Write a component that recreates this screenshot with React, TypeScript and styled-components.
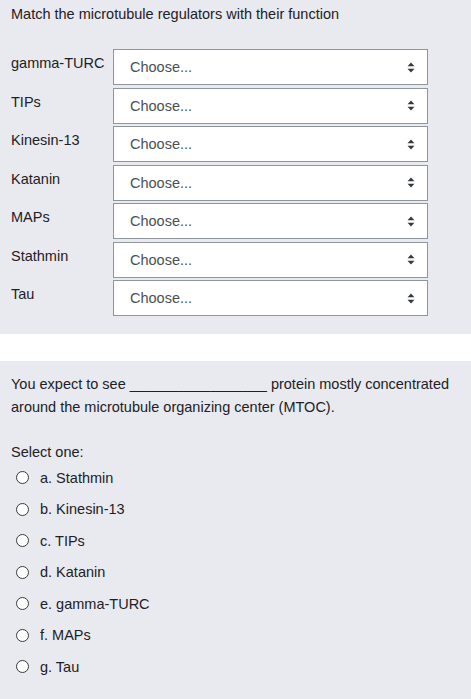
import * as React from 'react';
import styled, { createGlobalStyle } from 'styled-components';

const GlobalStyle = createGlobalStyle`
	html, body {
		margin: 0;
		padding: 0;
		background: #ffffff;
		font-family: "Liberation Sans", Arial, sans-serif;
		font-size: 14.5px;
		color: #1d2125;
	}
`;

const colors = {
	panel: '#e9eaf0',
	border: '#8f959e',
	muted: '#495057',
	text: '#1d2125',
};

const Page = styled.div`
	display: flex;
	flex-direction: column;
	gap: 27px;
	width: 471px;
`;

const Panel = styled.div<{ $tall?: boolean }>`
	background-color: ${colors.panel};
	padding: ${({ $tall }) => ($tall ? '12px 11px 20px' : '3px 11px 18px')};
	min-height: ${({ $tall }) => ($tall ? '306px' : 'auto')};
	line-height: 22.4px;
`;

const Prompt = styled.div`
	margin: 0;
`;

const MatchTable = styled.div`
	display: flex;
	flex-direction: column;
	gap: 2.5px;
	margin-top: 24px;
`;

const MatchRow = styled.div`
	display: flex;
	flex-direction: row;
	align-items: flex-start;
`;

const StemLabel = styled.div`
	width: 102px;
	padding-top: 3px;
	white-space: nowrap;
`;

const SelectBox = styled.div`
	display: flex;
	align-items: center;
	justify-content: space-between;
	box-sizing: border-box;
	width: 315px;
	height: 36px;
	padding: 0 12px 0 16px;
	background: #ffffff;
	border: 1px solid ${colors.border};
	color: ${colors.muted};
`;

const Arrows = () => (
	<svg width="8" height="11" viewBox="0 0 8 11">
		<path d="M4 0.5 L7.5 4.3 L0.5 4.3 Z" fill="#343a40" />
		<path d="M4 10.5 L7.5 6.7 L0.5 6.7 Z" fill="#343a40" />
	</svg>
);

const SelectOne = styled.div`
	margin-top: 23px;
`;

const Options = styled.div`
	display: flex;
	flex-direction: column;
	gap: 9.1px;
	margin-top: 3px;
	padding-left: 5px;
`;

const Option = styled.label`
	display: flex;
	flex-direction: row;
	align-items: center;
	gap: 11px;
`;

const Radio = styled.span`
	display: inline-block;
	box-sizing: border-box;
	width: 13px;
	height: 13px;
	border: 1.6px solid #3a3a3a;
	border-radius: 50%;
	background: #ffffff;
`;

const stems = ['gamma-TURC', 'TIPs', 'Kinesin-13', 'Katanin', 'MAPs', 'Stathmin', 'Tau'];

const choices = [
	'a. Stathmin',
	'b. Kinesin-13',
	'c. TIPs',
	'd. Katanin',
	'e. gamma-TURC',
	'f. MAPs',
	'g. Tau',
];

export default function App() {
	return (
		<Page>
			<GlobalStyle />
			<Panel>
				<Prompt>Match the microtubule regulators with their function</Prompt>
				<MatchTable>
					{stems.map((stem) => (
						<MatchRow key={stem}>
							<StemLabel>{stem}</StemLabel>
							<SelectBox>
								<span>Choose...</span>
								<Arrows />
							</SelectBox>
						</MatchRow>
					))}
				</MatchTable>
			</Panel>
			<Panel $tall>
				<Prompt>
					You expect to see _________________ protein mostly concentrated around the
					microtubule organizing center (MTOC).
				</Prompt>
				<SelectOne>Select one:</SelectOne>
				<Options>
					{choices.map((c) => (
						<Option key={c}>
							<Radio />
							<span>{c}</span>
						</Option>
					))}
				</Options>
			</Panel>
		</Page>
	);
}
